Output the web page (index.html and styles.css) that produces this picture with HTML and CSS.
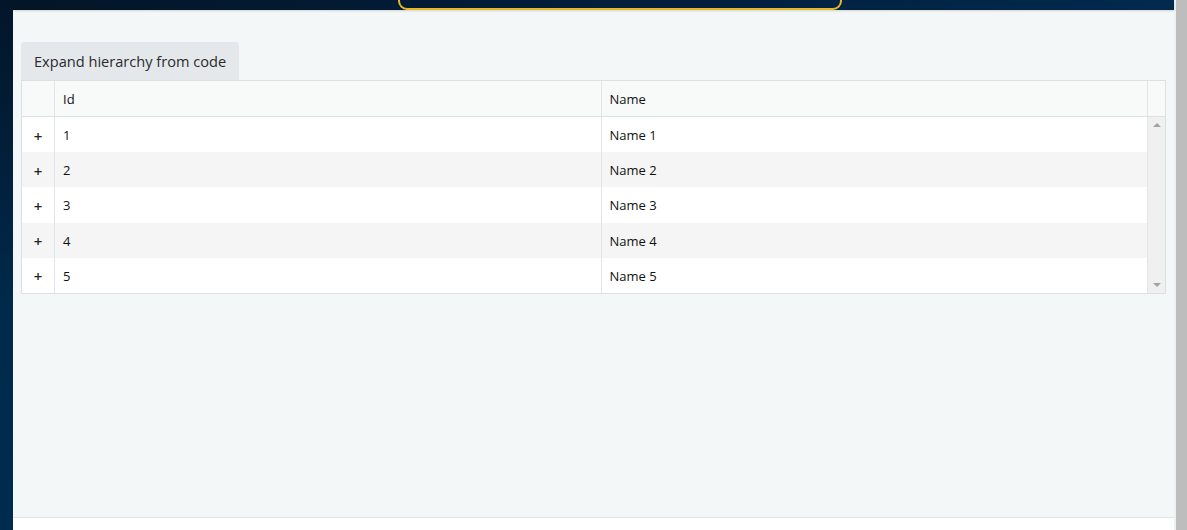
FILE: index.html
```html
<!DOCTYPE html>
<html>
<head>
<meta charset="utf-8">
<link rel="stylesheet" href="styles.css">
</head>
<body>
<div class="app">
  <div class="side"></div>
  <div class="main">
    <div class="topbar"><div class="search-box"></div></div>
    <div class="content">
      <button class="btn">Expand hierarchy from code</button>
      <div class="grid">
        <div class="grid-head">
          <div class="cell exp"></div>
          <div class="cell">Id</div>
          <div class="cell">Name</div>
          <div class="cell sb-head"></div>
        </div>
        <div class="grid-body">
          <div class="rows">
            <div class="row"><div class="cell exp">+</div><div class="cell">1</div><div class="cell">Name 1</div></div>
            <div class="row alt"><div class="cell exp">+</div><div class="cell">2</div><div class="cell">Name 2</div></div>
            <div class="row"><div class="cell exp">+</div><div class="cell">3</div><div class="cell">Name 3</div></div>
            <div class="row alt"><div class="cell exp">+</div><div class="cell">4</div><div class="cell">Name 4</div></div>
            <div class="row"><div class="cell exp">+</div><div class="cell">5</div><div class="cell">Name 5</div></div>
          </div>
          <div class="vscroll">
            <span class="arrow up"></span>
            <span class="arrow down"></span>
          </div>
        </div>
      </div>
    </div>
    <div class="footer"></div>
  </div>
  <div class="edge"></div>
  <div class="scroll-strip"></div>
</div>
</body>
</html>
```
FILE: styles.css
```css
* { box-sizing: border-box; }
html, body { margin: 0; padding: 0; height: 530px; overflow: hidden; }
body {
  font-family: "Open Sans", "Noto Sans", sans-serif;
  background: #00223f;
}
.app {
  display: flex;
  height: 530px;
}
.side {
  width: 13px;
  background: linear-gradient(180deg, #03152a 0%, #002a4c 60%, #002b4e 100%);
}
.main {
  flex: 1;
  display: flex;
  flex-direction: column;
}
.topbar {
  height: 10px;
  background: linear-gradient(90deg, #031528 0%, #02203e 60%, #012a4e 100%);
  position: relative;
  box-shadow: 0 1px 2px rgba(0,0,0,0.15);
  z-index: 1;
}
.search-box {
  position: absolute;
  left: 385px;
  bottom: 0;
  width: 444px;
  height: 30px;
  border: 2px solid #e7b722;
  border-radius: 9px;
}
.content {
  flex: 1;
  background: #f4f7f8;
  padding: 32px 8px 0 8px;
}
.footer {
  height: 13px;
  background: #ffffff;
  border-top: 1px solid #dfe3e5;
}
.edge {
  width: 2px;
  background: #eef1f2;
}
.scroll-strip {
  width: 11px;
  background: #bdbdbd;
}
.btn {
  display: block;
  font-family: inherit;
  font-size: 14.6px;
  color: #2b2b2b;
  background: #e4e8eb;
  border: none;
  border-radius: 3px 3px 0 0;
  height: 38px;
  padding: 0 13px;
  margin: 0;
}
.grid {
  border: 1px solid #dde0e2;
  background: #ffffff;
  font-size: 13px;
  color: #111;
}
.grid-head {
  display: grid;
  grid-template-columns: 33px 1fr 1fr 17px;
  height: 36px;
  background: #f8f9f9;
  border-bottom: 1px solid #dde0e2;
}
.cell {
  display: flex;
  align-items: center;
  padding-left: 8px;
  padding-top: 1px;
  border-right: 1px solid #e2e5e7;
}
.cell.exp {
  justify-content: center;
  padding-left: 0;
  padding-top: 2px;
  font-size: 15px;
  font-weight: 600;
  color: #222;
}
.grid-head .cell.exp { font-size: 13px; }
.cell.sb-head { border-right: none; padding: 0; }
.grid-body {
  display: flex;
}
.rows { flex: 1; }
.row {
  display: grid;
  grid-template-columns: 33px 1fr 1fr;
  height: 35.2px;
  background: #ffffff;
}
.row.alt { background: #f5f5f5; }
.row .cell:last-child { border-right: 1px solid #e2e5e7; }
.vscroll {
  width: 17px;
  background: #f0f0f0;
  display: flex;
  flex-direction: column;
  justify-content: space-between;
  align-items: center;
  padding: 6px 0 6px 1px;
}
.arrow {
  width: 0;
  height: 0;
  border-left: 4px solid transparent;
  border-right: 4px solid transparent;
}
.arrow.up { border-bottom: 4px solid #a3a3a3; }
.arrow.down { border-top: 4px solid #a3a3a3; }
```
